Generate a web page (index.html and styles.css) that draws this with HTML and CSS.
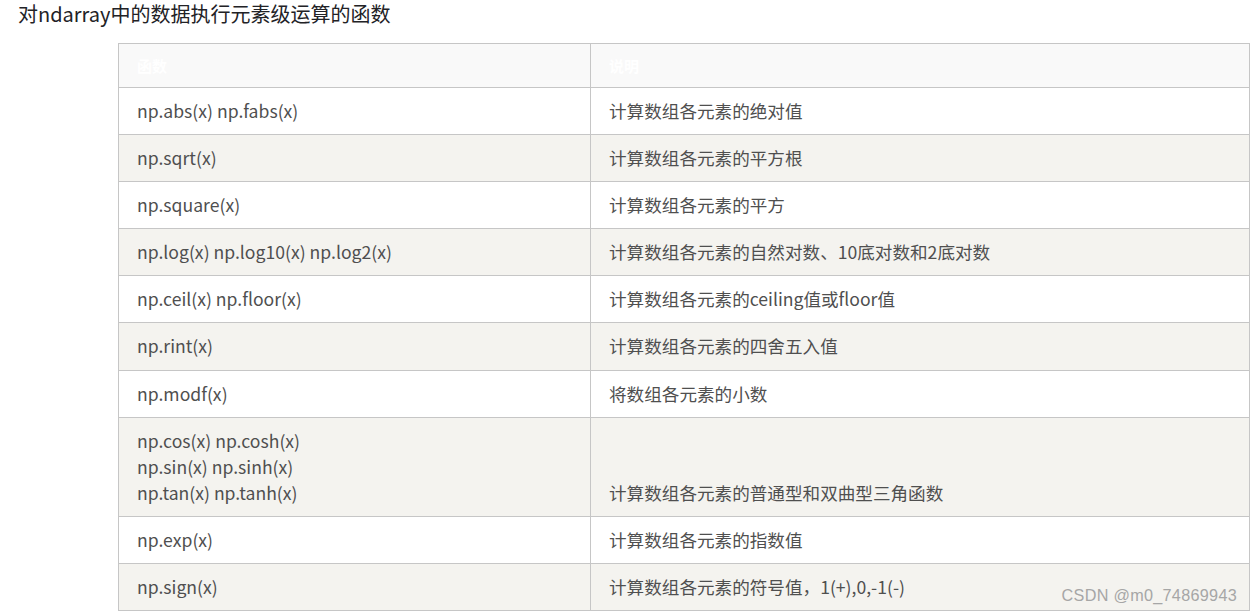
FILE: index.html
```html
<!DOCTYPE html>
<html lang="zh-CN">
<head>
<meta charset="utf-8">
<link rel="stylesheet" href="styles.css">
</head>
<body>
<div class="page">
  <h3 class="title">对ndarray中的数据执行元素级运算的函数</h3>
  <table class="ftable">
    <thead>
      <tr><th class="c1">函数</th><th class="c2">说明</th></tr>
    </thead>
    <tbody>
      <tr><td>np.abs(x) np.fabs(x)</td><td>计算数组各元素的绝对值</td></tr>
      <tr><td>np.sqrt(x)</td><td>计算数组各元素的平方根</td></tr>
      <tr><td>np.square(x)</td><td>计算数组各元素的平方</td></tr>
      <tr><td>np.log(x) np.log10(x) np.log2(x)</td><td>计算数组各元素的自然对数、10底对数和2底对数</td></tr>
      <tr><td>np.ceil(x) np.floor(x)</td><td>计算数组各元素的ceiling值或floor值</td></tr>
      <tr><td>np.rint(x)</td><td>计算数组各元素的四舍五入值</td></tr>
      <tr><td>np.modf(x)</td><td>将数组各元素的小数</td></tr>
      <tr><td>np.cos(x) np.cosh(x)<br>np.sin(x) np.sinh(x)<br>np.tan(x) np.tanh(x)</td><td class="bottom">计算数组各元素的普通型和双曲型三角函数</td></tr>
      <tr><td>np.exp(x)</td><td>计算数组各元素的指数值</td></tr>
      <tr><td>np.sign(x)</td><td>计算数组各元素的符号值，1(+),0,-1(-)</td></tr>
    </tbody>
  </table>
  <div class="watermark">CSDN @m0_74869943</div>
</div>
</body>
</html>
```

FILE: styles.css
```css
html, body {
  margin: 0;
  padding: 0;
  background: #ffffff;
}
.page {
  position: relative;
  padding: 0 0 0 18px;
  height: 613px;
  overflow: hidden;
  font-family: "Noto Sans CJK SC", "Noto Sans", sans-serif;
}
.title {
  margin: 0;
  padding-top: 1px;
  font-size: 20px;
  line-height: 25px;
  font-weight: normal;
  color: #222226;
  height: 42px;
}
.ftable {
  margin-left: 100px;
  border-collapse: collapse;
  width: 1132px;
  table-layout: fixed;
  font-size: 17.6px;
  line-height: 26.1px;
  color: #4f4f4f;
}
.ftable th, .ftable td {
  border: 1px solid #c6c6c6;
  padding: 10px 18px;
  text-align: left;
  vertical-align: middle;
}
.ftable th {
  background: #f9f9f9;
  color: #ffffff;
  font-weight: bold;
  font-size: 15px;
  line-height: 23px;
}
.ftable .c1 { width: 435px; }
.ftable tbody tr:nth-child(even) td {
  background: #f4f3ef;
}
.ftable td.bottom {
  vertical-align: bottom;
}
.watermark {
  position: absolute;
  right: 15px;
  bottom: 8px;
  font-family: "Liberation Sans", Arial, sans-serif;
  font-size: 16.2px;
  color: #a6a6a6;
  letter-spacing: 0.3px;
}
```
